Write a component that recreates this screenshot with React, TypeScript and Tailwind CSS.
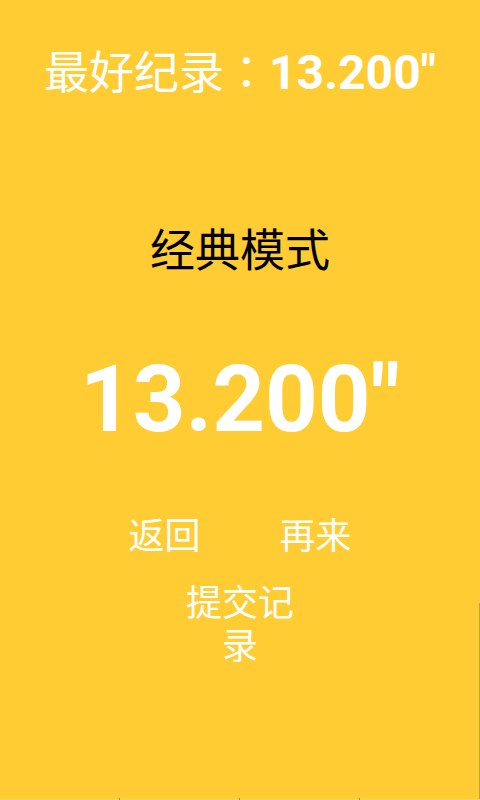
export default function App() {
  const cjk = '"Noto Sans CJK SC", "Noto Sans", sans-serif';
  const num = 'Roboto, "Liberation Sans", sans-serif';

  return (
    <div
      className="relative flex h-[800px] w-full flex-col items-center overflow-hidden bg-[#ffcc33]"
      style={{ fontFamily: cjk }}
    >
      {/* best record */}
      <div className="mt-[40px] whitespace-nowrap text-[45px] leading-[60px] text-white">
        <span>最好纪录</span>
        <span style={{ fontFamily: '"Noto Sans CJK TC", sans-serif' }}>：</span>
        <span className="text-[48px] font-bold" style={{ fontFamily: num }}>
          13.200″
        </span>
      </div>

      <div className="mt-[115px] text-[45px] leading-[60px] text-black">经典模式</div>

      <div
        className="mt-[72px] text-[92px] font-bold leading-[100px] text-white"
        style={{ fontFamily: num }}
      >
        13.200″
      </div>

      <div className="mt-[61px] flex gap-[31px]">
        <button className="w-[120px] text-[36px] leading-[44px] text-white">返回</button>
        <button className="w-[120px] text-[36px] leading-[44px] text-white">再来</button>
      </div>

      <button className="mt-[24px] w-[120px] text-[36px] leading-[43px] text-white">
        提交记录
      </button>

      {/* screen edge artifacts */}
      <div className="absolute right-0 top-[603px] bottom-0 w-px bg-[#c9a12c]" />
      <div className="absolute bottom-0 left-0 h-px w-full bg-[#ffd35a]" />
      <div className="absolute bottom-0 left-[119px] h-[2px] w-px bg-[#a8862a]" />
      <div className="absolute bottom-0 left-[239px] h-[2px] w-px bg-[#a8862a]" />
      <div className="absolute bottom-0 left-[359px] h-[2px] w-px bg-[#a8862a]" />
    </div>
  );
}
